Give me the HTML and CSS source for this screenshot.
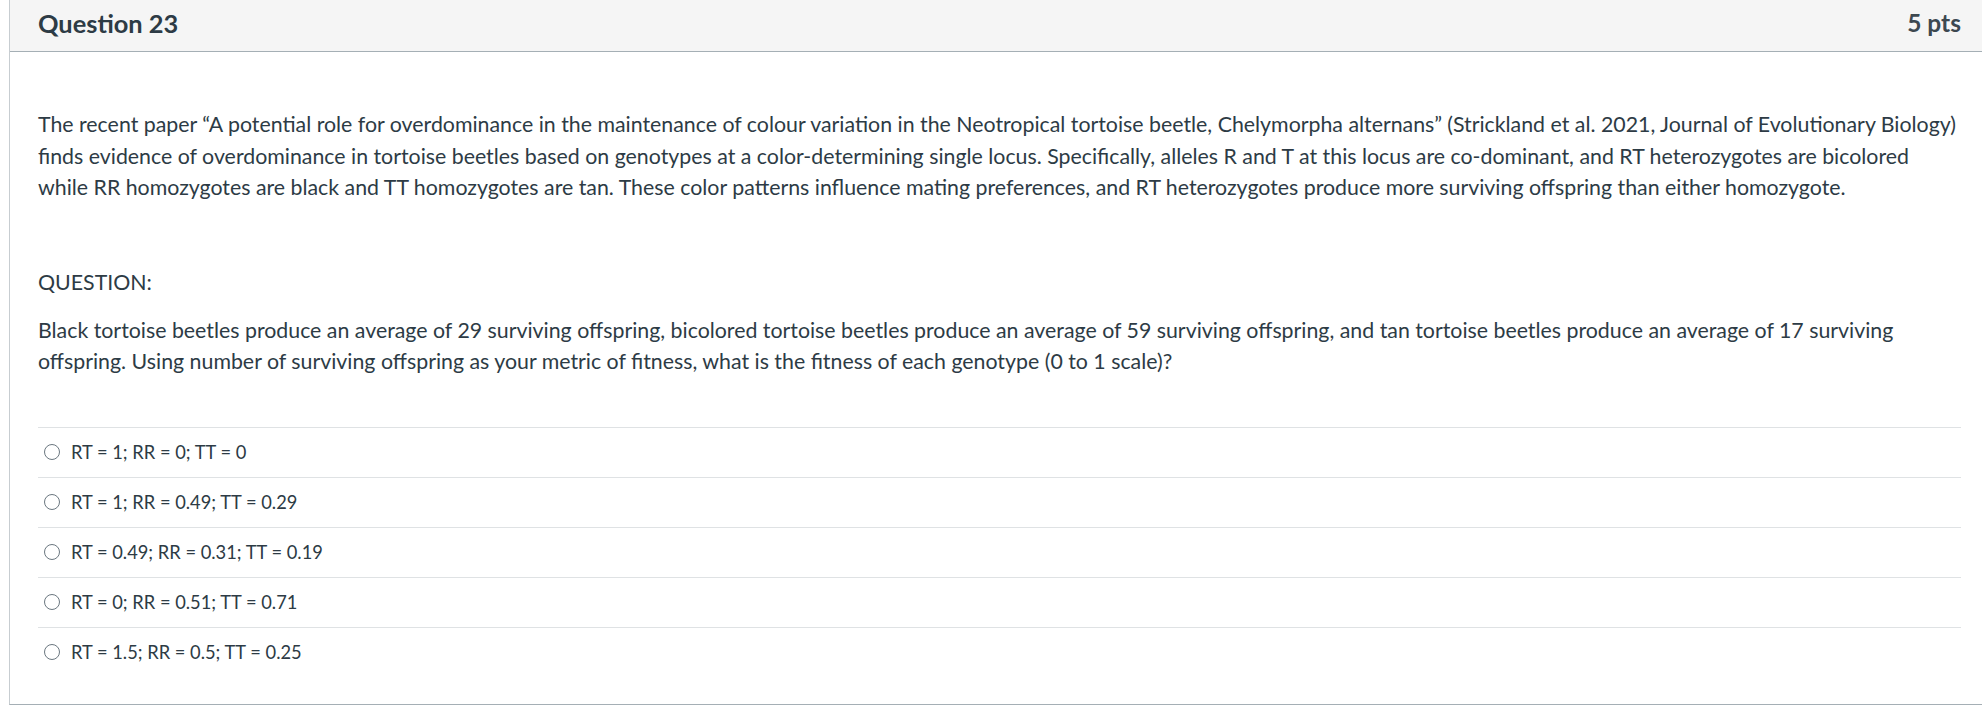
FILE: index.html
```html
<!DOCTYPE html>
<html>
<head>
<meta charset="utf-8">
<link rel="stylesheet" href="styles.css">
</head>
<body>
<div class="card">
  <div class="header">
    <span class="title">Question 23</span>
    <span class="pts">5 pts</span>
  </div>
  <div class="content">
    <div class="text">
      <p>The recent paper “A potential role for overdominance in the maintenance of colour variation in the Neotropical tortoise beetle, Chelymorpha alternans” (Strickland et al. 2021, Journal of Evolutionary Biology) finds evidence of overdominance in tortoise beetles based on genotypes at a color-determining single locus. Specifically, alleles R and T at this locus are co-dominant, and RT heterozygotes are bicolored while RR homozygotes are black and TT homozygotes are tan. These color patterns influence mating preferences, and RT heterozygotes produce more surviving offspring than either homozygote.</p>
      <p>&nbsp;</p>
      <p>QUESTION:</p>
      <p>Black tortoise beetles produce an average of 29 surviving offspring, bicolored tortoise beetles produce an average of 59 surviving offspring, and tan tortoise beetles produce an average of 17 surviving offspring. Using number of surviving offspring as your metric of fitness, what is the fitness of each genotype (0 to 1 scale)?</p>
    </div>
    <div class="answers">
      <label class="answer"><span class="radio"></span><span class="label">RT = 1; RR = 0; TT = 0</span></label>
      <label class="answer"><span class="radio"></span><span class="label">RT = 1; RR = 0.49; TT = 0.29</span></label>
      <label class="answer"><span class="radio"></span><span class="label">RT = 0.49; RR = 0.31; TT = 0.19</span></label>
      <label class="answer"><span class="radio"></span><span class="label">RT = 0; RR = 0.51; TT = 0.71</span></label>
      <label class="answer"><span class="radio"></span><span class="label">RT = 1.5; RR = 0.5; TT = 0.25</span></label>
    </div>
  </div>
</div>
</body>
</html>
```

FILE: styles.css
```css
html, body {
  margin: 0;
  padding: 0;
  background: #ffffff;
  overflow: hidden;
}
body {
  font-family: Lato, "Noto Sans", sans-serif;
  color: #2d3b45;
}
.card {
  margin-left: 9px;
  width: 1981px;
  box-sizing: border-box;
  border: 1px solid #c7cdd1;
  border-top: none;
  border-bottom-color: #a5afb5;
  background: #fff;
}
.header {
  background: #f5f5f5;
  border-bottom: 1px solid #a5afb5;
  padding: 0 28px 6px 28px;
  box-sizing: border-box;
  height: 52px;
  display: flex;
  align-items: center;
  justify-content: space-between;
}
.title {
  font-weight: 700;
  font-size: 25.4px;
}
.pts {
  font-weight: 700;
  font-size: 24.5px;
  color: #3d4850;
}
.content {
  padding: 57px 28px 27px 28px;
}
.text {
  font-size: 21.33px;
  line-height: 31.5px;
}
.text p {
  margin: 0 0 16px 0;
}
.text p:last-child {
  margin-bottom: 0;
}
.answers {
  margin-top: 49px;
}
.answer {
  display: flex;
  align-items: center;
  height: 50px;
  box-sizing: border-box;
  border-top: 1px solid #dfe2e4;
  padding-left: 6px;
  font-size: 18.3px;
}
.radio {
  width: 16px;
  height: 16px;
  box-sizing: border-box;
  border: 1.5px solid #6b7780;
  border-radius: 50%;
  margin-right: 11px;
  flex: none;
}
```
